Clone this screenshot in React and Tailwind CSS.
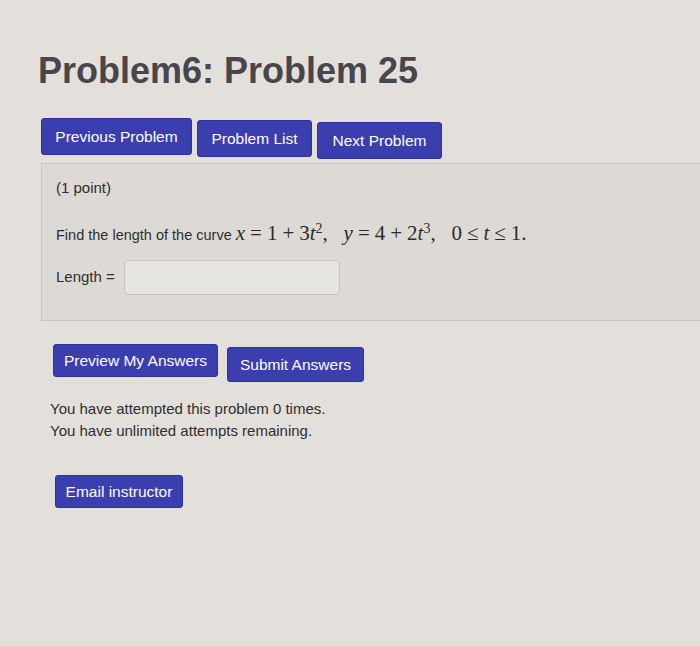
import React from "react";

const btn =
  "bg-[#3b3eae] text-white rounded-[3px] border border-[#2f3296] flex items-center justify-center text-[15.5px]";

function Op({ children }) {
  return <span className="mx-[5px]">{children}</span>;
}

function Math() {
  return (
    <span className="font-['Liberation_Serif',serif] text-[21px] text-[#2b2b2d] ml-[4px]">
      <i>x</i>
      <Op>=</Op>1<Op>+</Op>3<i>t</i>
      <sup className="text-[14px]">2</sup>,&nbsp;&nbsp; <i>y</i>
      <Op>=</Op>4<Op>+</Op>2<i>t</i>
      <sup className="text-[14px]">3</sup>,&nbsp;&nbsp; 0<Op>≤</Op>
      <i>t</i>
      <Op>≤</Op>1.
    </span>
  );
}

export default function App() {
  return (
    <div className="w-[700px] h-[646px] overflow-hidden bg-[#e3e0dc] font-['Liberation_Sans',Arial,sans-serif] text-[#2e2e30]">
      <div className="pl-[38px] pt-[51px]">
        <h1 className="text-[36px] leading-[40px] font-bold text-[#48464b]">
          Problem6: Problem 25
        </h1>
      </div>

      {/* nav */}
      <div className="flex gap-[5px] pl-[41px] mt-[27px]">
        <button className={btn + " w-[151px] h-[37px]"}>Previous Problem</button>
        <button className={btn + " w-[115px] h-[37px] mt-[2px]"}>Problem List</button>
        <button className={btn + " w-[125px] h-[37px] mt-[4px]"}>Next Problem</button>
      </div>

      {/* problem box */}
      <div className="ml-[41px] mt-[4px] w-[680px] h-[158px] bg-[#dddad6] border border-[#cbc8c4] pl-[14px] pt-[14px]">
        <div className="text-[15px] leading-[20px]">(1 point)</div>
        <div className="mt-[23px] flex items-baseline text-[14.5px] leading-[24px]">
          <span>Find the length of the curve</span>
          <Math />
        </div>
        <div className="mt-[13px] flex items-center">
          <span className="text-[15px]">Length =</span>
          <div className="ml-[9px] w-[216px] h-[35px] bg-[#e6e4e1] border border-[#c6c3bf] rounded-[4px]" />
        </div>
      </div>

      {/* submit */}
      <div className="flex gap-[9px] pl-[53px] mt-[23px]">
        <button className={btn + " w-[165px] h-[33px]"}>Preview My Answers</button>
        <button className={btn + " w-[137px] h-[35px] mt-[3px]"}>Submit Answers</button>
      </div>

      <div className="pl-[50px] mt-[16px] text-[15px] leading-[22px]">
        <div>You have attempted this problem 0 times.</div>
        <div>You have unlimited attempts remaining.</div>
      </div>

      <div className="pl-[55px] mt-[33px]">
        <button className={btn + " w-[128px] h-[33px]"}>Email instructor</button>
      </div>
    </div>
  );
}
